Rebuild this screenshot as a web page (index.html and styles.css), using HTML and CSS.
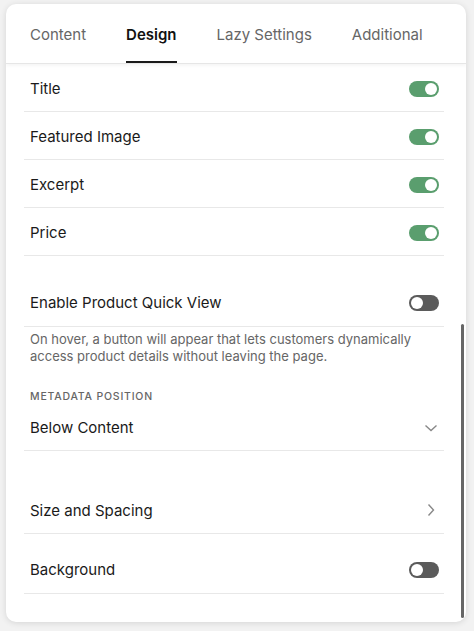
FILE: index.html
```html
<!DOCTYPE html>
<html>
<head>
<meta charset="utf-8">
<link rel="stylesheet" href="styles.css">
</head>
<body>
<div class="card">
  <nav class="tabs">
    <span class="tab">Content</span>
    <span class="tab active">Design</span>
    <span class="tab">Lazy Settings</span>
    <span class="tab">Additional</span>
  </nav>
  <div class="body">
    <div class="row"><span>Title</span><span class="toggle on"></span></div>
    <div class="row"><span>Featured Image</span><span class="toggle on"></span></div>
    <div class="row"><span>Excerpt</span><span class="toggle on"></span></div>
    <div class="row"><span>Price</span><span class="toggle on"></span></div>
    <div class="row spaced"><span>Enable Product Quick View</span><span class="toggle"></span></div>
    <p class="desc">On hover, a button will appear that lets customers dynamically access product details without leaving the page.</p>
    <div class="label">METADATA POSITION</div>
    <div class="row select"><span>Below Content</span>
      <svg class="chev" width="14" height="14" viewBox="0 0 14 14"><path d="M1.5 4.5 L7 9.5 L12.5 4.5" fill="none" stroke="#888" stroke-width="1.4"/></svg>
    </div>
    <div class="row spaced2"><span>Size and Spacing</span>
      <svg class="chev" width="14" height="14" viewBox="0 0 14 14"><path d="M4.5 1.5 L9.5 7 L4.5 12.5" fill="none" stroke="#888" stroke-width="1.4"/></svg>
    </div>
    <div class="row spaced3"><span>Background</span><span class="toggle"></span></div>
    <div class="scrollbar"></div>
  </div>
</div>
</body>
</html>
```
FILE: styles.css
```css
html, body { margin: 0; padding: 0; }
body {
  background: #f2f2f2;
  font-family: Inter, "Helvetica Neue", Arial, sans-serif;
  color: #1a1a1a;
  width: 474px;
  height: 631px;
  overflow: hidden;
}
.card {
  position: relative;
  margin: 4px 8px 0 6px;
  height: 618px;
  background: #fff;
  border-radius: 10px;
  box-shadow: 0 1px 6px rgba(0,0,0,0.12);
  overflow: hidden;
}
.tabs {
  display: flex;
  height: 59px;
  padding-left: 24px;
  border-bottom: 1px solid #e6e6e6;
  box-shadow: 0 2px 3px rgba(0,0,0,0.04);
}
.tab {
  display: flex;
  align-items: center;
  font-size: 15px;
  color: #666;
  margin-right: 40px;
  border-bottom: 2px solid transparent;
  padding-top: 4px;
  box-sizing: border-box;
}
.tab:last-child { margin-right: 0; }
.tab.active {
  color: #111;
  font-weight: 600;
  border-bottom-color: #1a1a1a;
}
.body {
  position: relative;
  padding: 0 22px 0 18px;
}
.row {
  display: flex;
  justify-content: space-between;
  align-items: center;
  box-sizing: border-box;
  height: 48px;
  border-bottom: 1px solid #e8e8e8;
  padding: 2px 5px 0 6px;
  font-size: 15px;
  color: #1a1a1a;
}
.row.spaced { margin-top: 23px; padding-top: 0; }
.row.select { height: 48px; padding-top: 2px; }
.row.spaced2 { margin-top: 36px; height: 47px; padding-top: 0; }
.row.spaced3 { margin-top: 11px; height: 49px; padding-top: 1px; }
.toggle {
  position: relative;
  width: 30px;
  height: 16px;
  border-radius: 8px;
  background: #5b5b5b;
}
.toggle::after {
  content: "";
  position: absolute;
  top: 2px;
  left: 2px;
  width: 12px;
  height: 12px;
  border-radius: 50%;
  background: #fff;
}
.toggle.on { background: #5a9e6e; }
.toggle.on::after { left: 16px; }
.chev { margin-right: 1px; }
.desc {
  margin: 4px 0 0;
  padding: 0 6px;
  font-size: 13px;
  line-height: 17px;
  color: #666;
}
.label {
  margin-top: 25px;
  padding: 0 6px;
  font-size: 10.5px;
  line-height: 13px;
  letter-spacing: 0.8px;
  color: #666;
  font-weight: 500;
}
.scrollbar {
  position: absolute;
  right: 2px;
  top: 260px;
  width: 3px;
  height: 294px;
  background: #666;
  border-radius: 2px;
}
```
